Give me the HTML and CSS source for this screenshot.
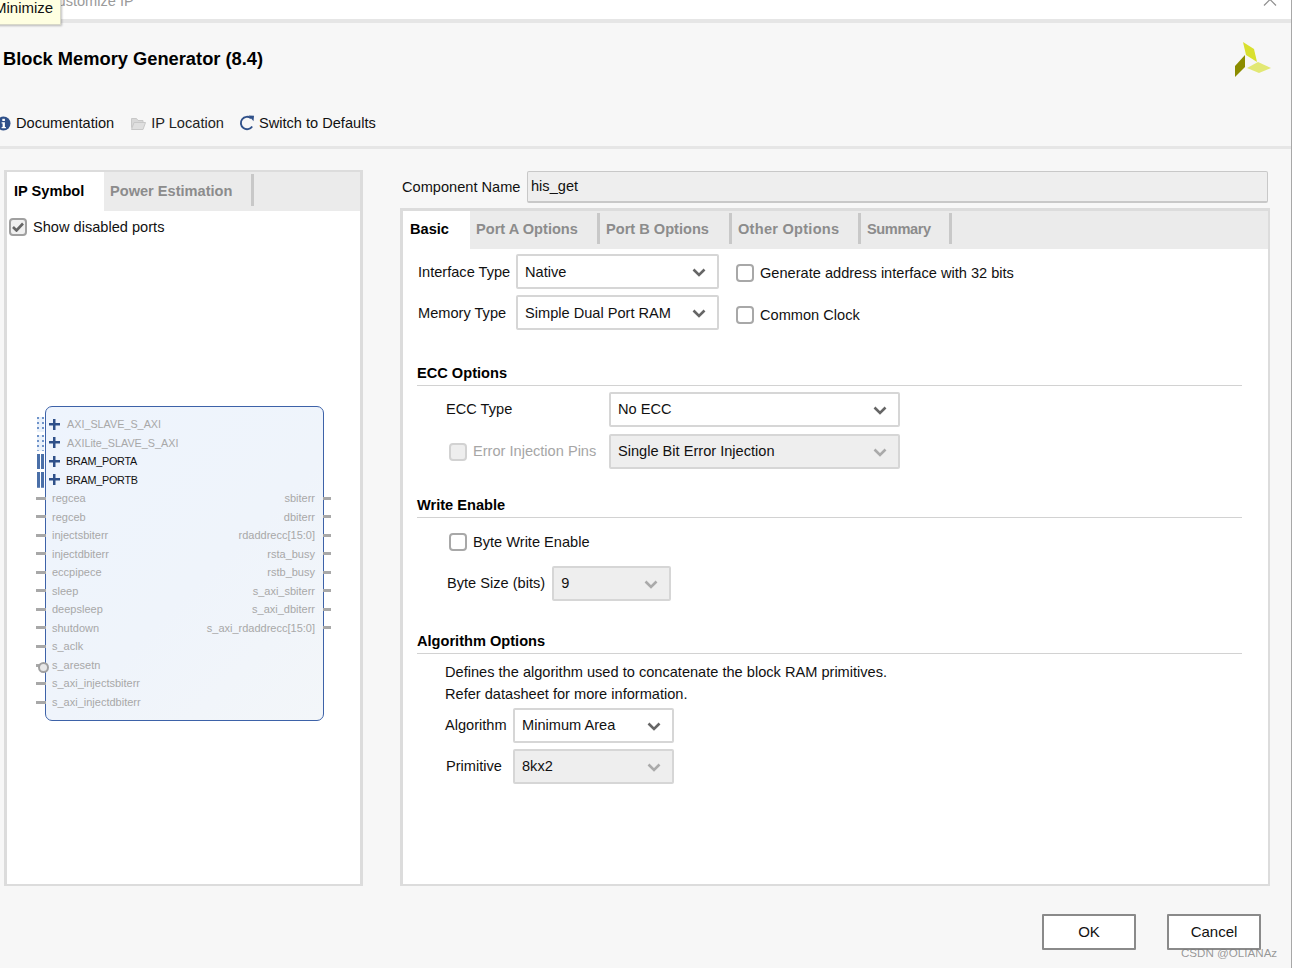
FILE: index.html
```html
<!DOCTYPE html>
<html lang="en">
<head>
<meta charset="utf-8">
<title>Customize IP</title>
<link rel="stylesheet" href="styles.css">
</head>
<body>
<div class="app">
  <div class="tooltip">Minimize</div>
  <div class="titlebar">
    <span class="window-title">Customize IP</span>
    <svg class="close" width="14" height="8" viewBox="0 0 14 8"><path d="M1 7.5 L7 1.5 L13 7.5" fill="none" stroke="#8f8f8f" stroke-width="1.2"/></svg>
  </div>
  <header class="header">
    <div class="title-row">
      <h1 class="title">Block Memory Generator (8.4)</h1>
      <svg class="logo" width="38" height="38" viewBox="0 0 38 38"><polygon points="1,36 1,25 11,14 11,26" fill="#8b8c00"/><polygon points="9,1 20,8 23,21 12,14" fill="#d9e02f"/><polygon points="13,27 24,21 37,27 25,32" fill="#e2e874"/></svg>
    </div>
    <nav class="toolbar">
      <span class="tool tool-doc"><svg width="15" height="15" viewBox="0 0 15 15"><circle cx="7.5" cy="7.5" r="7" fill="#2f5089"/><rect x="6.3" y="2.8" width="2.6" height="2.2" fill="#fff"/><path d="M5.6 6.3h3.3v4.6h1v1.3H5.6v-1.3h1V7.6h-1z" fill="#fff"/></svg>Documentation</span>
      <span class="tool tool-loc"><svg width="15" height="13" viewBox="0 0 15 13"><path d="M0.5 1.5h5l1.5 2h5v2h-8l-3.500 5z" fill="#d8d8d8" stroke="#c8c8c8"/><path d="M0.500 12.500l2.500-7h11.500l-2.500 7z" fill="#dfdfdf" stroke="#c8c8c8"/></svg>IP Location</span>
      <span class="tool"><svg width="16" height="16" viewBox="0 0 16 16"><path d="M13.200 11.500A6.200 6.200 0 1 1 12 3.200" fill="none" stroke="#2f5089" stroke-width="1.900"/><polygon points="9.500,0.500 15,0.800 14.500,6.300" fill="#2f5089"/></svg>Switch to Defaults</span>
    </nav>
  </header>

  <main class="main">
    <section class="panel left-panel">
      <div class="tabs left-tabs">
        <span class="tab active ip-tab">IP Symbol</span>
        <span class="tab power-tab">Power Estimation</span>
      </div>
      <div class="left-body">
        <label class="check-row show-ports"><span class="cb checked"><svg width="12" height="10" viewBox="0 0 12 10"><path d="M1 5 L4.500 8.500 L11 1.500" fill="none" stroke="#666" stroke-width="2.600"/></svg></span>Show disabled ports</label>
        <div class="symbol">
          <div class="row bus dashed"><span class="plus"></span><span class="lbl">AXI_SLAVE_S_AXI</span></div>
          <div class="row bus dashed"><span class="plus"></span><span class="lbl">AXILite_SLAVE_S_AXI</span></div>
          <div class="row bus solid"><span class="plus"></span><span class="lbl on">BRAM_PORTA</span></div>
          <div class="row bus solid"><span class="plus"></span><span class="lbl on">BRAM_PORTB</span></div>
          <div class="row pin pin-r"><span class="lbl">regcea</span><span class="lbl">sbiterr</span></div>
          <div class="row pin pin-r"><span class="lbl">regceb</span><span class="lbl">dbiterr</span></div>
          <div class="row pin pin-r"><span class="lbl">injectsbiterr</span><span class="lbl">rdaddrecc[15:0]</span></div>
          <div class="row pin pin-r"><span class="lbl">injectdbiterr</span><span class="lbl">rsta_busy</span></div>
          <div class="row pin pin-r"><span class="lbl">eccpipece</span><span class="lbl">rstb_busy</span></div>
          <div class="row pin pin-r"><span class="lbl">sleep</span><span class="lbl">s_axi_sbiterr</span></div>
          <div class="row pin pin-r"><span class="lbl">deepsleep</span><span class="lbl">s_axi_dbiterr</span></div>
          <div class="row pin pin-r"><span class="lbl">shutdown</span><span class="lbl">s_axi_rdaddrecc[15:0]</span></div>
          <div class="row pin"><span class="lbl">s_aclk</span></div>
          <div class="row pin reset"><span class="lbl">s_aresetn</span></div>
          <div class="row pin"><span class="lbl">s_axi_injectsbiterr</span></div>
          <div class="row pin"><span class="lbl">s_axi_injectdbiterr</span></div>
        </div>
      </div>
    </section>

    <section class="right-col">
      <div class="name-row">
        <span class="name-label">Component Name</span>
        <span class="name-input">his_get</span>
      </div>
      <div class="panel right-panel">
        <div class="tabs right-tabs">
          <span class="tab active basic-tab">Basic</span>
          <span class="tab sep porta-tab">Port A Options</span>
          <span class="tab sep portb-tab">Port B Options</span>
          <span class="tab sep other-tab">Other Options</span>
          <span class="tab sep summary-tab">Summary</span>
        </div>
        <div class="form">
          <div class="top-grid">
            <span class="top-label">Interface Type</span>
            <div class="select s-top"><span>Native</span><svg class="chev" width="14" height="9" viewBox="0 0 14 9"><path d="M1.500 1.500L7 7L12.500 1.500" fill="none" stroke="#666" stroke-width="2.600"/></svg></div>
            <label class="check-row row1-check"><span class="cb"></span>Generate address interface with 32 bits</label>
            <span class="top-label">Memory Type</span>
            <div class="select s-top"><span>Simple Dual Port RAM</span><svg class="chev" width="14" height="9" viewBox="0 0 14 9"><path d="M1.500 1.500L7 7L12.500 1.500" fill="none" stroke="#666" stroke-width="2.600"/></svg></div>
            <label class="check-row row2-check"><span class="cb"></span>Common Clock</label>
          </div>

          <h2 class="section ecc-head">ECC Options</h2>
          <div class="ecc-grid">
            <span class="field-label ecc-label">ECC Type</span>
            <div class="select s-ecc"><span>No ECC</span><svg class="chev" width="14" height="9" viewBox="0 0 14 9"><path d="M1.500 1.500L7 7L12.500 1.500" fill="none" stroke="#666" stroke-width="2.600"/></svg></div>
            <label class="check-row off-check"><span class="cb disabled"></span><span class="field-label">Error Injection Pins</span></label>
            <div class="select s-ecc disabled"><span>Single Bit Error Injection</span><svg class="chev" width="14" height="9" viewBox="0 0 14 9"><path d="M1.500 1.500L7 7L12.500 1.500" fill="none" stroke="#aaa" stroke-width="2.600"/></svg></div>
          </div>

          <h2 class="section write-head">Write Enable</h2>
          <label class="check-row byte-write"><span class="cb"></span>Byte Write Enable</label>
          <div class="byte-size">
            <span class="field-label">Byte Size (bits)</span>
            <div class="select s-byte disabled"><span>9</span><svg class="chev" width="14" height="9" viewBox="0 0 14 9"><path d="M1.500 1.500L7 7L12.500 1.500" fill="none" stroke="#aaa" stroke-width="2.600"/></svg></div>
          </div>

          <h2 class="section algo-head">Algorithm Options</h2>
          <p class="algo-text">Defines the algorithm used to concatenate the block RAM primitives.<br>Refer datasheet for more information.</p>
          <div class="algo-grid">
            <span class="field-label">Algorithm</span>
            <div class="select s-algo"><span>Minimum Area</span><svg class="chev" width="14" height="9" viewBox="0 0 14 9"><path d="M1.500 1.500L7 7L12.500 1.500" fill="none" stroke="#666" stroke-width="2.600"/></svg></div>
            <span class="field-label prim-label">Primitive</span>
            <div class="select s-algo disabled"><span>8kx2</span><svg class="chev" width="14" height="9" viewBox="0 0 14 9"><path d="M1.500 1.500L7 7L12.500 1.500" fill="none" stroke="#aaa" stroke-width="2.600"/></svg></div>
          </div>
        </div>
      </div>
    </section>
  </main>

  <footer class="footer">
    <button class="btn" type="button">OK</button>
    <button class="btn" type="button">Cancel</button>
  </footer>
  <div class="watermark">CSDN @OLIANAz</div>
</div>
</body>
</html>
```
FILE: styles.css
```css
* { box-sizing: border-box; }
html, body { margin: 0; padding: 0; }
body { width: 1292px; height: 968px; overflow: hidden; background: #f7f7f7; font-family: "Liberation Sans", Arial, sans-serif; color: #111; font-size: 14.6px; }
.app { position: relative; width: 1292px; height: 968px; overflow: hidden; border-right: 1px solid #a8a8a8; }

.titlebar { height: 23px; background: #fff; border-bottom: 4px solid #e6e6e6; display: flex; justify-content: space-between; align-items: flex-start; overflow: hidden; padding-right: 14px; }
.window-title { margin: -7px 0 0 47px; color: #9a9a9a; font-size: 14.6px; }
.close { margin-top: -2px; }
.tooltip { position: absolute; left: -12px; top: -2px; width: 73px; height: 27px; background: #ffffe1; border: 1px solid #d8d8c8; box-shadow: 1px 1px 2px rgba(0,0,0,.25); padding: 0 0 0 5px; font-size: 15px; z-index: 5; white-space: nowrap; }

.header { height: 126px; border-bottom: 3px solid #e6e6e6; display: flex; flex-direction: column; }
.title-row { display: flex; justify-content: space-between; padding: 0 19px 0 3px; height: 82px; }
.title { margin: 25px 0 0; font-size: 18.3px; line-height: 22px; font-weight: bold; color: #000; }
.logo { margin-top: 18px; }
.toolbar { display: flex; align-items: center; height: 22px; margin-top: 7px; margin-left: -4px; }
.tool { display: flex; align-items: center; gap: 4px; white-space: nowrap; }
.tool-doc { margin-right: 17px; gap: 5px; }
.tool-loc { margin-right: 15px; color: #222; gap: 5px; }

.main { display: flex; align-items: flex-start; padding: 21px 0 0 4px; }
.panel { border: 2px solid #dcdcdc; background: #fff; }
.left-panel { width: 359px; height: 716px; border-left-width: 3px; border-right-width: 3px; }
.tabs { display: flex; background: #ebebeb; font-weight: bold; color: #8c8c8c; }
.tab { display: flex; align-items: center; white-space: nowrap; }
.tab.active { background: #fff; color: #000; }
.left-tabs { height: 39px; }
.ip-tab { width: 97px; padding: 0 0 2px 7px; }
.power-tab { padding: 0 0 2px 6px; width: 150px; position: relative; }
.power-tab::after, .sep::after { content: ""; position: absolute; right: 0; top: 2px; bottom: 5px; width: 3px; background: #c8c8c8; }
.left-body { position: relative; height: 673px; }
.check-row { display: flex; align-items: center; gap: 6px; white-space: nowrap; }
.cb { width: 18px; height: 18px; border: 2px solid #a8a8a8; border-radius: 4px; background: #fff; display: flex; align-items: center; justify-content: center; flex: none; }
.cb.checked { background: #f0f0f0; border-color: #a0a0a0; }
.cb.disabled { background: #eee; border-color: #d2d2d2; }
.show-ports { padding: 7px 0 0 2px; }

.symbol { position: absolute; left: 38px; top: 195px; width: 279px; height: 315px; border: 1px solid #3d62a8; border-radius: 7px; background: linear-gradient(135deg, #eef4fd 0%, #eff4fb 55%, #f3f6f9 100%); padding-top: 7.800px; font-size: 11px; color: #a8a8a8; }
.row { position: relative; height: 18.530px; display: flex; align-items: center; justify-content: space-between; padding: 0 8px 0 6px; white-space: nowrap; }
.row.bus { padding-left: 3px; justify-content: flex-start; font-size: 10.800px; }
.lbl.on { color: #111; letter-spacing: -.25px; margin-left: -1px; }
.plus { position: relative; width: 11px; height: 11px; margin-right: 7px; background: linear-gradient(#2f5089,#2f5089) center/11px 2.500px no-repeat, linear-gradient(#2f5089,#2f5089) center/2.500px 11px no-repeat; }
.row.bus::before { content: ""; position: absolute; left: -9px; top: 2px; bottom: 1px; width: 7px; }
.row.dashed::before { background: repeating-linear-gradient(#6f93c9 0 2px, transparent 2px 5px) left/2px 100% no-repeat, repeating-linear-gradient(#6f93c9 0 2px, transparent 2px 5px) right/2px 100% no-repeat, #e9f1fb; }
.row.solid::before { background: linear-gradient(#4a6fa8,#4a6fa8) left/3px 100% no-repeat, linear-gradient(#4a6fa8,#4a6fa8) right/3px 100% no-repeat; }
.row.pin::before { content: ""; position: absolute; left: -10px; top: 8px; width: 10px; height: 3px; background: #a8a8a8; }
.row.pin-r::after { content: ""; position: absolute; right: -8px; top: 8px; width: 8px; height: 3px; background: #a8a8a8; }
.row.reset::after { content: ""; position: absolute; left: -8px; top: 6px; width: 7px; height: 7px; border-radius: 50%; border: 2px solid #a0a0a0; background: #e8e8e8; }

.right-col { width: 870px; margin-left: 37px; }
.name-row { display: flex; align-items: center; height: 33px; padding-left: 2px; }
.name-label { width: 125px; }
.name-input { flex: none; width: 741px; height: 32px; background: #eee; border: 1px solid #c8c8c8; border-bottom-width: 2px; border-radius: 2px; display: flex; align-items: center; padding-left: 3px; }
.right-panel { margin-top: 5px; height: 678px; border-left-width: 3px; border-right-width: 2px; border-top-width: 3px; padding: 0; }
.right-tabs { height: 38px; }
.right-tabs .tab { padding-bottom: 2px; }
.basic-tab { width: 67px; padding-left: 7px; }
.sep { position: relative; padding-left: 6px; }
.porta-tab { width: 130px; }
.portb-tab { width: 132px; }
.other-tab { width: 129px; letter-spacing: .25px; }
.summary-tab { width: 91px; letter-spacing: -.4px; }

.form { padding: 5px 26px 0 14px; }
.select { display: flex; align-items: center; justify-content: space-between; height: 35px; background: #fff; border: 2px solid #d6d6d6; border-radius: 2px; padding: 0 11px 2px 7px; white-space: nowrap; }
.select.disabled { background: #eee; }
.s-top { padding-bottom: 0; }
.chev { flex: none; margin-top: 4px; }
.s-top .chev { margin-top: 2px; }
.field-label { padding-bottom: 2px; }
.top-grid { display: grid; grid-template-columns: 99px 203px auto; row-gap: 6px; align-items: center; }
.top-label { padding-left: 1px; }
.top-grid .check-row { margin-left: 17px; }
.top-grid .row1-check { margin-top: 2px; }
.top-grid .row2-check { margin-top: 4px; }
.section { margin: 0; font-size: 14.600px; line-height: 18px; font-weight: bold; color: #000; border-bottom: 1px solid #d2d2d2; padding-bottom: 3px; }
.ecc-head { margin-top: 34px; }
.ecc-grid { display: grid; grid-template-columns: 192px 291px; row-gap: 7px; align-items: center; margin-top: 6px; }
.ecc-label { padding-left: 29px; }
.off-check { padding-left: 32px; color: #a6a6a6; }
.write-head { margin-top: 27px; }
.byte-write { margin: 15px 0 0 32px; }
.byte-size { display: flex; align-items: center; gap: 7px; margin: 15px 0 0 30px; }
.s-byte { width: 119px; }
.algo-head { margin-top: 31px; }
.algo-text { margin: 7px 0 0 28px; line-height: 22px; }
.algo-grid { display: grid; grid-template-columns: 68px 161px; row-gap: 6px; align-items: center; margin: 3px 0 0 28px; }
.prim-label { padding-left: 1px; }

.footer { display: flex; justify-content: flex-end; gap: 31px; padding: 28px 30px 0 0; }
.btn { width: 94px; height: 36px; background: #fff; border: 2px solid #8a8a8a; border-radius: 1px; font: inherit; font-size: 15px; color: #111; padding: 0 0 2px; }
.watermark { position: absolute; left: 1181px; top: 946px; font-size: 11.600px; color: rgba(120,120,120,.75); white-space: nowrap; }
```
